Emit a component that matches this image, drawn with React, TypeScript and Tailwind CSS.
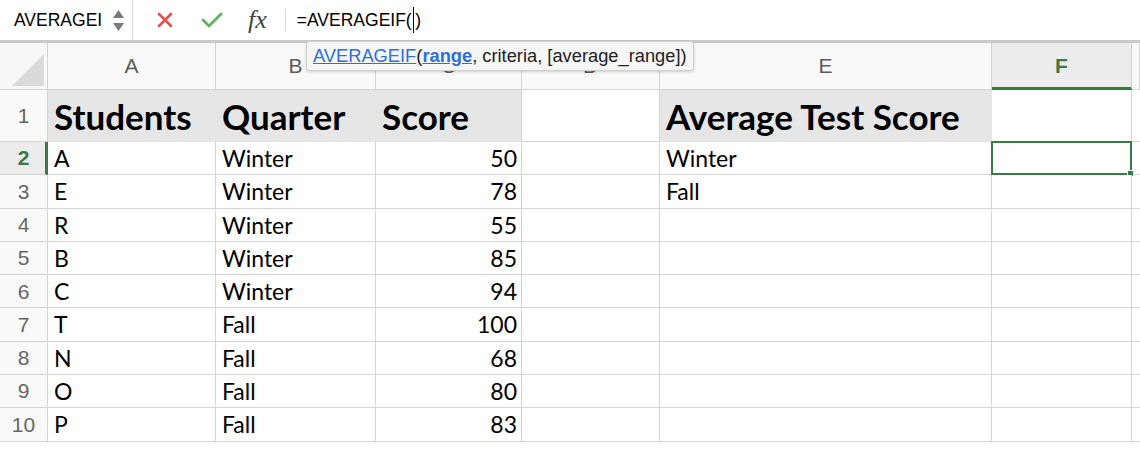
import React from "react";

const COLS = ["A", "B", "C", "D", "E", "F", "G"];

const ROWS: Array<[string, string, string, string]> = [
  ["A", "Winter", "50", "Winter"],
  ["E", "Winter", "78", "Fall"],
  ["R", "Winter", "55", ""],
  ["B", "Winter", "85", ""],
  ["C", "Winter", "94", ""],
  ["T", "Fall", "100", ""],
  ["N", "Fall", "68", ""],
  ["O", "Fall", "80", ""],
  ["P", "Fall", "83", ""],
];

const cellFont = { fontFamily: "Lato, 'Open Sans', sans-serif" };

function Toolbar() {
  return (
    <div
      className="flex h-[43px] items-stretch border-b-[3px] border-[#c9c9c9] bg-white"
      style={{ fontFamily: "'Liberation Sans', Arial, sans-serif" }}
    >
      <div className="flex w-[133px] items-center border-r border-[#d9d9d9] pl-[14px]">
        <span className="text-[17.5px] text-black">AVERAGEI</span>
        <div className="ml-[11px] flex flex-col gap-[5px]">
          <svg width="11" height="8" viewBox="0 0 11 8">
            <polygon points="5.5,0 11,8 0,8" fill="#7a7a7a" />
          </svg>
          <svg width="11" height="8" viewBox="0 0 11 8">
            <polygon points="0,0 11,0 5.5,8" fill="#7a7a7a" />
          </svg>
        </div>
      </div>
      <div className="flex items-center pl-[24px]">
        <svg width="16" height="16" viewBox="0 0 16 16">
          <path d="M2 2 L14 14 M14 2 L2 14" stroke="#e0504d" strokeWidth="2.6" strokeLinecap="round" />
        </svg>
        <svg width="22" height="16" viewBox="0 0 22 16" className="ml-[28px]">
          <path d="M2 8 L8 14 L20 2" stroke="#5db460" strokeWidth="2.8" fill="none" strokeLinecap="round" strokeLinejoin="round" />
        </svg>
        <span
          className="ml-[25px] text-[26px] italic leading-none text-[#444]"
          style={{ fontFamily: "'Liberation Serif', 'Times New Roman', serif" }}
        >
          fx
        </span>
        <div className="ml-[18px] h-[22px] w-px bg-[#d9d9d9]" />
        <div className="ml-[11px] flex items-center text-[17.5px] text-black">
          <span>=AVERAGEIF(</span>
          <span className="mx-[1px] inline-block h-[26px] w-[1.5px] bg-black" />
          <span>)</span>
        </div>
      </div>
    </div>
  );
}

function Tooltip() {
  return (
    <div
      className="absolute left-[306px] top-[41px] z-10 flex h-[30px] items-center rounded-[3px] border border-[#cfcfcf] bg-[#f6f6f6] px-[6px] text-[18.3px] text-[#222] shadow-[0_1px_3px_rgba(0,0,0,0.18)]"
      style={{ fontFamily: "'Liberation Sans', Arial, sans-serif" }}
    >
      <span className="text-[#2f6fd8] underline">AVERAGEIF</span>
      <span>(</span>
      <span className="font-bold text-[#2f6fd8] underline">range</span>
      <span>, criteria, [average_range])</span>
    </div>
  );
}

function ColumnHeaders() {
  return (
    <div className="flex h-[47px]" style={{ fontFamily: "'Liberation Sans', Arial, sans-serif" }}>
      <div className="relative w-[48px] shrink-0 border-b border-r border-[#d4d4d4] bg-[#f8f8f8]">
        <svg width="32" height="32" viewBox="0 0 32 32" className="absolute bottom-[3px] right-[3px]">
          <polygon points="32,0 32,32 0,32" fill="#dadada" />
        </svg>
      </div>
      {COLS.map((c, i) => {
        const widths = ["w-[168px]", "w-[160px]", "w-[146px]", "w-[138px]", "w-[332px]", "w-[140px]", "flex-1"];
        const active = c === "F";
        return (
          <div
            key={c}
            className={
              "flex items-center justify-center border-r text-[21px] " +
              widths[i] +
              (active
                ? " border-b-[3px] border-b-[#3b7a45] border-r-[#d4d4d4] bg-[#ececec] pt-[2px] font-bold text-[#3b7a45]"
                : " border-b border-[#d4d4d4] bg-[#f9f9f9] text-[#5c5c5c]")
            }
          >
            {c !== "G" ? c : ""}
          </div>
        );
      })}
    </div>
  );
}

function RowHeader({ n, h, active }: { n: number; h: string; active?: boolean }) {
  return (
    <div
      className={
        "flex w-[48px] shrink-0 items-center justify-center border-b border-[#d4d4d4] text-[21px] " +
        h +
        (active
          ? " border-r-[3px] border-r-[#3b7a45] bg-[#ececec] pl-[2px] font-bold text-[#3b7a45]"
          : " border-r bg-[#f9f9f9] text-[#666]")
      }
      style={{ fontFamily: "'Liberation Sans', Arial, sans-serif" }}
    >
      {n}
    </div>
  );
}

function HeaderRow() {
  const fill = "bg-[#e7e6e6] border-[#e7e6e6]";
  return (
    <div className="flex h-[52px]">
      <RowHeader n={1} h="h-[52px]" />
      <div className="flex text-[35px] font-bold leading-none text-black" style={cellFont}>
        <div className={"flex w-[168px] items-end border-b border-r pb-[7px] pl-[6px] " + fill}>Students</div>
        <div className={"flex w-[160px] items-end border-b border-r pb-[7px] pl-[6px] " + fill}>Quarter</div>
        <div className={"flex w-[146px] items-end border-b border-r border-r-[#d4d4d4] pb-[7px] pl-[6px] bg-[#e7e6e6] border-b-[#e7e6e6]"}>Score</div>
        <div className="w-[138px] border-b border-r border-[#d4d4d4] bg-white" />
        <div className={"flex w-[332px] items-end border-b border-r pb-[7px] pl-[6px] " + fill}>Average Test Score</div>
        <div className="w-[140px] border-b border-r border-[#d4d4d4] bg-white" />
      </div>
      <div className="flex-1 border-b border-[#d4d4d4]" />
    </div>
  );
}

function DataRow({ row, idx }: { row: [string, string, string, string]; idx: number }) {
  const n = idx + 2;
  const active = n === 2;
  const cell = "flex items-center border-b border-r border-[#d4d4d4] bg-white";
  return (
    <div className="flex h-[33.3px]">
      <RowHeader n={n} h="h-[33.3px]" active={active} />
      <div className="flex text-[23px] text-black" style={cellFont}>
        <div className={cell + " w-[168px] pl-[6px]"}>{row[0]}</div>
        <div className={cell + " w-[160px] pl-[6px]"}>{row[1]}</div>
        <div className={cell + " w-[146px] justify-end pr-[4px]"}>{row[2]}</div>
        <div className={cell + " w-[138px]"} />
        <div className={cell + " w-[332px] pl-[6px]"}>{row[3]}</div>
        <div className={cell + " relative w-[140px]"}>
          {active && (
            <div className="absolute -left-px -top-px bottom-[-1px] right-[-1px] border-2 border-[#3b7a45]">
              <div className="absolute -bottom-[4px] -right-[4px] h-[7px] w-[7px] border border-white bg-[#3b7a45]" />
            </div>
          )}
        </div>
      </div>
      <div className="flex-1 border-b border-[#d4d4d4]" />
    </div>
  );
}

export default function App() {
  return (
    <div className="relative h-[450px] w-[1140px] overflow-hidden bg-white">
      <Toolbar />
      <Tooltip />
      <ColumnHeaders />
      <HeaderRow />
      {ROWS.map((r, i) => (
        <DataRow key={i} row={r} idx={i} />
      ))}
    </div>
  );
}
